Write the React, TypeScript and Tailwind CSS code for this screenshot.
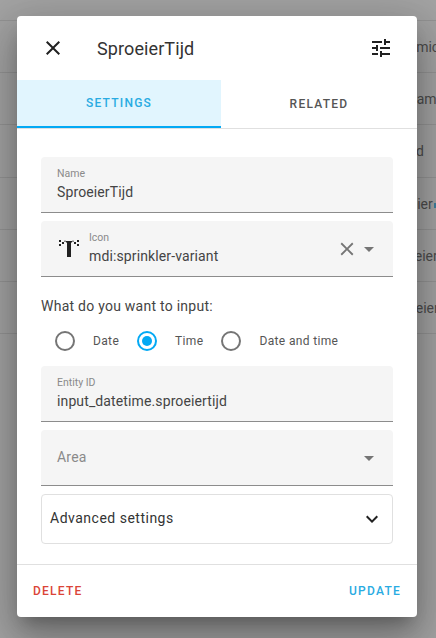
import React from "react";

const font = { fontFamily: "Roboto, sans-serif" };

const rows = [
  { text: "Dynamic", left: "pl-[385px]" },
  { text: "Programma", left: "pl-[383px]" },
  { text: "Tijd", left: "pl-[401px]" },
  { text: "Sproeier", left: "pl-[381px]", dot: true },
  { text: "Sproeier", left: "pl-[386px]" },
  { text: "Sproeier", left: "pl-[387px]" },
];

const Mdi = ({ d, className }: { d: string; className: string }) => (
  <svg viewBox="0 0 24 24" className={className} fill="currentColor">
    <path d={d} />
  </svg>
);

const CLOSE =
  "M19,6.41L17.59,5L12,10.59L6.41,5L5,6.41L10.59,12L5,17.59L6.41,19L12,13.41L17.59,19L19,17.59L13.41,12L19,6.41Z";
const TUNE =
  "M3,17V19H9V17H3M3,5V7H13V5H3M13,21V19H21V17H13V15H11V21H13M7,9V11H3V13H7V15H9V9H7M21,13V11H11V13H21M15,9H17V7H21V5H17V3H15V9Z";
const MENU_DOWN = "M7,10L12,15L17,10H7Z";
const CHEVRON = "M7.41,8.58L12,13.17L16.59,8.58L18,10L12,16L6,10L7.41,8.58Z";

const SprinklerIcon = () => (
  <svg viewBox="0 0 24 24" className="w-6 h-6 shrink-0 text-[#212121]" fill="currentColor">
    <path d="M10,20V7H14V20H10M9,4H15V5.5H14V7H10V5.5H9V4Z" />
    <path d="M2,3H4V5H2V3M2,7H4V9H2V7M5,5H7V7H5V5M7.5,3.5H8.5V5H7.5V3.5M15.5,3.5H16.5V5H15.5V3.5M17,5H19V7H17V5M20,3H22V5H20V3M20,7H22V9H20V7Z" />
  </svg>
);

const Field = ({ label, value }: { label: string; value: string }) => (
  <div className="h-14 bg-[#f5f5f5] rounded-t border-b border-[#8c8c8c] px-4 pt-[10px]">
    <div className="text-[10.5px] leading-[14px] text-[#8a8a8a]">{label}</div>
    <div className="text-sm leading-[22px] text-[#444444] tracking-[0.12px]">{value}</div>
  </div>
);

const Radio = ({ label, checked }: { label: string; checked?: boolean }) => (
  <div className="flex items-center pr-1">
    <div className="w-12 h-10 flex items-center justify-center mr-1">
      <div
        className={
          checked
            ? "w-5 h-5 rounded-full border-2 border-[#03a9f4] flex items-center justify-center"
            : "w-5 h-5 rounded-full border-2 border-[#757575]"
        }
      >
        {checked && <div className="w-2.5 h-2.5 rounded-full bg-[#03a9f4]" />}
      </div>
    </div>
    <span className="text-xs tracking-[0.35px] text-[#555555]">{label}</span>
  </div>
);

export default function App() {
  return (
    <div className="relative w-[436px] h-[638px] overflow-hidden bg-[#a3a3a3]" style={font}>
      <div className="pt-[20px]">
        {rows.map((row) => (
          <div
            key={row.text + row.left}
            className={`h-[52.2px] border-t border-[#949494] flex items-center pt-px whitespace-nowrap text-sm text-[#4c4c4c] ${row.left}`}
          >
            {row.text}
            {row.dot && <span className="w-[5px] h-[5px] mt-[3px] ml-px shrink-0 bg-[#3f7f9f]" />}
          </div>
        ))}
        <div className="border-t border-[#949494]" />
      </div>

      <div className="absolute left-[17px] top-[16px] w-[400px] h-[601px] bg-white rounded flex flex-col shadow-[0_11px_15px_-7px_rgba(0,0,0,0.25),0_24px_38px_3px_rgba(0,0,0,0.18),0_9px_46px_8px_rgba(0,0,0,0.16)]">
        <div className="h-16 shrink-0 flex items-center pl-6 pr-6 text-[#212121]">
          <Mdi d={CLOSE} className="w-6 h-6" />
          <h2 className="ml-8 text-[18px] font-normal tracking-[0.1px] text-[#333333]">SproeierTijd</h2>
          <Mdi d={TUNE} className="w-6 h-6 ml-auto -mt-px" />
        </div>

        <div className="h-[49px] shrink-0 flex border-b border-[#e0e0e0] text-xs font-medium tracking-[1.25px]">
          <div className="w-[204px] h-[48px] bg-[#e1f5fe] border-b-2 border-[#03a9f4] text-[#29abe2] flex items-center justify-center">
            SETTINGS
          </div>
          <div className="flex-1 flex items-center justify-center text-[#555555]">RELATED</div>
        </div>

        <div className="flex-1 px-6 pt-7">
          <div className="flex flex-col gap-2">
            <Field label="Name" value="SproeierTijd" />
            <div className="h-14 bg-[#f5f5f5] rounded-t border-b border-[#8c8c8c] pl-4 pr-3 flex items-center">
              <SprinklerIcon />
              <div className="ml-2 mt-[1px]">
                <div className="text-[10.5px] leading-[14px] text-[#8a8a8a]">Icon</div>
                <div className="text-sm leading-[22px] text-[#444444] tracking-[0.12px]">mdi:sprinkler-variant</div>
              </div>
              <Mdi d={CLOSE} className="w-[22px] h-[22px] ml-auto -mr-px text-[#757575]" />
              <Mdi d={MENU_DOWN} className="w-6 h-6 text-[#757575]" />
            </div>
          </div>

          <p className="mt-[19px] text-sm leading-5 tracking-[0.25px] text-[#444444]">What do you want to input:</p>
          <div className="flex mt-[5px]">
            <Radio label="Date" />
            <Radio label="Time" checked />
            <Radio label="Date and time" />
          </div>

          <div className="mt-[5px] flex flex-col gap-2">
            <Field label="Entity ID" value="input_datetime.sproeiertijd" />
            <div className="h-14 bg-[#f5f5f5] rounded-t border-b border-[#8c8c8c] pl-4 pr-3 flex items-center">
              <span className="text-sm text-[#8a8a8a] tracking-[0.2px] -mt-[2px]">Area</span>
              <Mdi d={MENU_DOWN} className="w-6 h-6 ml-auto text-[#757575]" />
            </div>
            <div className="h-[50px] rounded border border-[#e0e0e0] pl-2 pr-2 flex items-center justify-between">
              <span className="text-sm font-[450] tracking-[0.5px] text-[#333333] -mt-[3px]">Advanced settings</span>
              <Mdi d={CHEVRON} className="w-6 h-6 text-[#212121]" />
            </div>
          </div>
        </div>

        <div className="h-[53px] shrink-0 border-t border-[#e0e0e0] flex items-center justify-between px-4 text-xs font-medium tracking-[1.25px]">
          <span className="text-[#db4437]">DELETE</span>
          <span className="text-[#29abe2]">UPDATE</span>
        </div>
      </div>
    </div>
  );
}
